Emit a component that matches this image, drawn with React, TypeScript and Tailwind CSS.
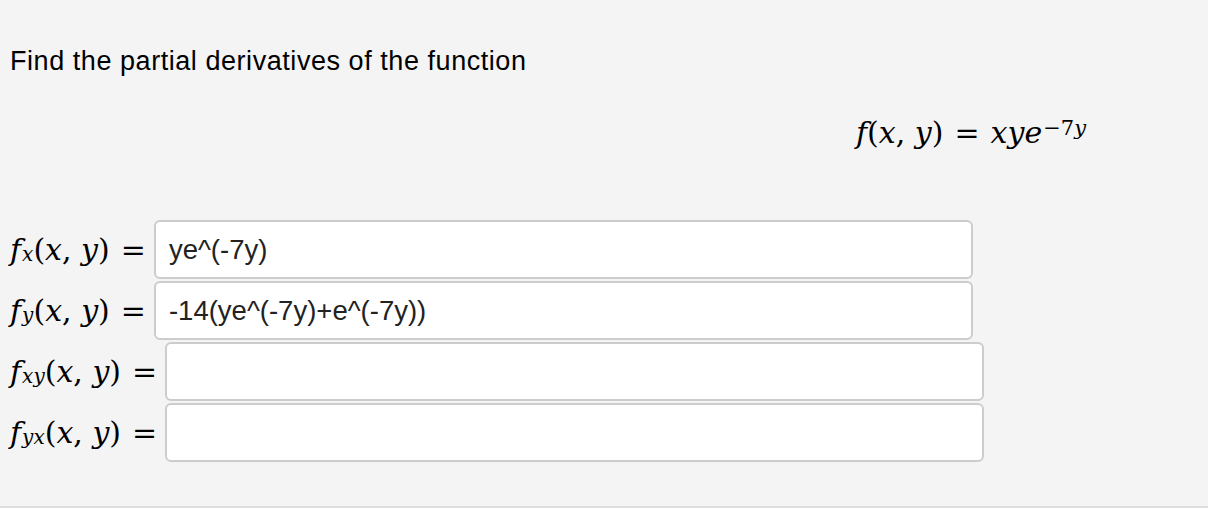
import React from "react";

const mathFont = { fontFamily: '"DejaVu Serif", "Liberation Serif", serif' };

// 斜体变量
function V({ children }: { children: React.ReactNode }) {
  return <span className="italic">{children}</span>;
}

function Label({ sub }: { sub: string }) {
  return (
    <span className="whitespace-nowrap text-[30px] leading-none text-black" style={mathFont}>
      <V>f</V>
      <sub className="relative -bottom-[1px] ml-[1px] text-[20px] italic leading-none">{sub}</sub>
      <span>(</span>
      <V>x</V>
      <span>, </span>
      <V>y</V>
      <span>)</span>
      <span className="ml-[11px] mr-[8px]">=</span>
    </span>
  );
}

const rows = [
  { sub: "x", value: "ye^(-7y)" },
  { sub: "y", value: "-14(ye^(-7y)+e^(-7y))" },
  { sub: "xy", value: "" },
  { sub: "yx", value: "" },
];

export default function App() {
  return (
    <div
      className="min-h-[516px] bg-white"
      style={{ fontFamily: '"Liberation Sans", Arial, sans-serif' }}
    >
      <div className="h-[508px] bg-[#f4f4f4] border-b-2 border-[#dedede] pt-[45px] pl-[10px]">
        <p className="text-[27px] leading-[32px] tracking-[0.55px] text-black">
          Find the partial derivatives of the function
        </p>

        {/* 函数 */}
        <div className="mt-[36px] flex justify-end pr-[122px]">
          <span className="whitespace-nowrap text-[30px] leading-[40px] text-black" style={mathFont}>
            <V>f</V>(<V>x</V>, <V>y</V>)<span className="mx-[11px]">=</span>
            <V>xye</V>
            <sup className="relative -top-[8px] ml-[1px] text-[21px]">
              −7<V>y</V>
            </sup>
          </span>
        </div>

        {/* 输入行 */}
        <div className="mt-[67px] flex flex-col gap-[2px]">
          {rows.map((r) => (
            <div key={r.sub} className="flex items-center">
              <Label sub={r.sub} />
              <div className="h-[59px] w-[819px] rounded-[6px] border-2 border-[#cccccc] bg-white pl-[13px] flex items-center text-[27.5px] text-[#222]">
                {r.value}
              </div>
            </div>
          ))}
        </div>
      </div>
    </div>
  );
}
